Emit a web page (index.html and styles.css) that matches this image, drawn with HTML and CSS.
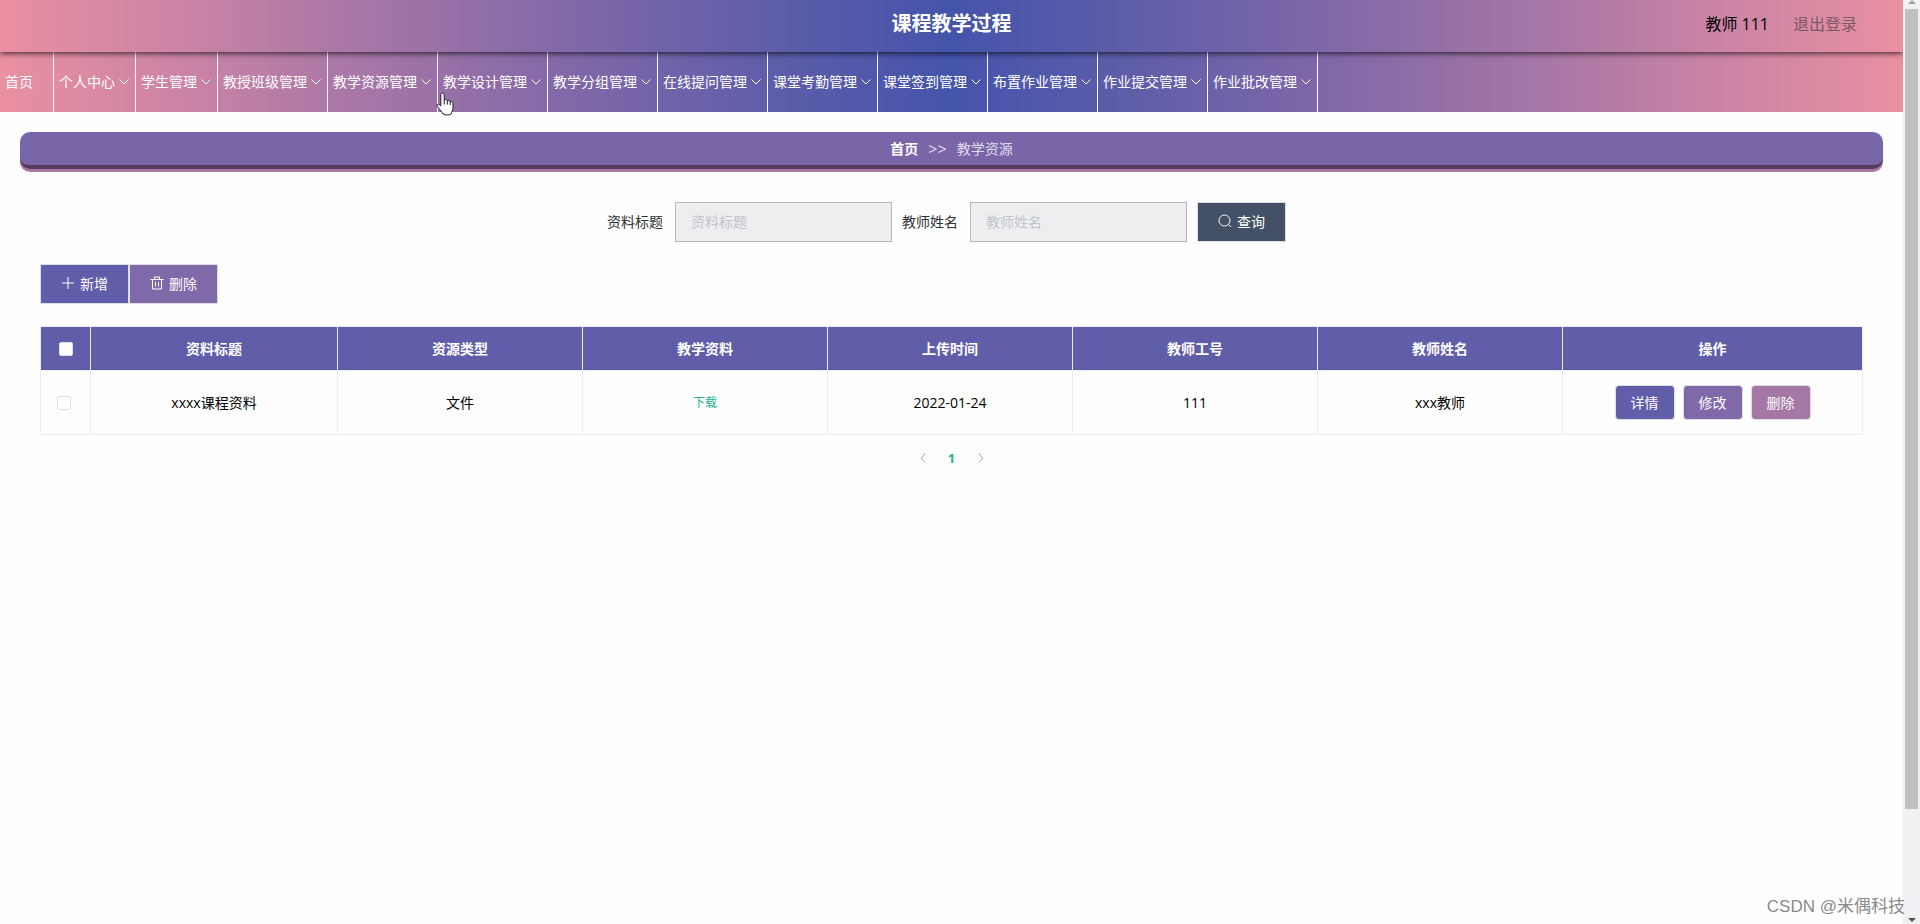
FILE: index.html
```html
<!DOCTYPE html>
<html lang="zh-CN">
<head>
  <meta charset="UTF-8">
  <meta name="viewport" content="width=device-width, initial-scale=1">
  <title>课程教学过程</title>
  <link rel="stylesheet" href="styles.css">
</head>
<body>
  <svg class="symbols" aria-hidden="true">
    <symbol id="arrow" viewBox="0 0 10 6"><path d="M0.5 0.5 5 5 9.5 0.5"/></symbol>
  </svg>

  <div class="app">
    <header class="header">
      <h1>课程教学过程</h1>
      <div class="user">
        <span>教师 111</span>
        <a href="#" class="logout">退出登录</a>
      </div>
    </header>

    <nav class="menu">
      <a href="#" class="home">首页</a>
      <a href="#">个人中心<svg><use href="#arrow"/></svg></a>
      <a href="#">学生管理<svg><use href="#arrow"/></svg></a>
      <a href="#">教授班级管理<svg><use href="#arrow"/></svg></a>
      <a href="#">教学资源管理<svg><use href="#arrow"/></svg></a>
      <a href="#">教学设计管理<svg><use href="#arrow"/></svg></a>
      <a href="#">教学分组管理<svg><use href="#arrow"/></svg></a>
      <a href="#">在线提问管理<svg><use href="#arrow"/></svg></a>
      <a href="#">课堂考勤管理<svg><use href="#arrow"/></svg></a>
      <a href="#">课堂签到管理<svg><use href="#arrow"/></svg></a>
      <a href="#">布置作业管理<svg><use href="#arrow"/></svg></a>
      <a href="#">作业提交管理<svg><use href="#arrow"/></svg></a>
      <a href="#">作业批改管理<svg><use href="#arrow"/></svg></a>
    </nav>

    <main class="main">
      <div class="breadcrumb">
        <a href="#">首页</a>
        <span class="separator">&gt;&gt;</span>
        <span>教学资源</span>
      </div>

      <div class="content">
        <form class="search">
          <div class="field">
            <label for="title">资料标题</label>
            <input type="text" id="title" placeholder="资料标题">
          </div>
          <div class="field">
            <label for="teacher">教师姓名</label>
            <input type="text" id="teacher" placeholder="教师姓名">
          </div>
          <button type="button" class="btn btn-search">
            <svg class="icon" viewBox="0 0 14 14"><circle cx="6.5" cy="6.5" r="5.5"/><path d="M10.5 10.5 13 13"/></svg>查询
          </button>
        </form>

        <div class="actions">
          <button type="button" class="btn btn-blue">
            <svg class="icon" viewBox="0 0 14 14"><path d="M7 1v12M1 7h12"/></svg>新增
          </button>
          <button type="button" class="btn btn-purple">
            <svg class="icon" viewBox="0 0 14 14"><path d="M0.5 3.5h13M4.5 3V1h5v2M2.5 3.5v9.5h9V3.5M5.5 6v4.5M8.5 6v4.5"/></svg>删除
          </button>
        </div>

        <table class="list">
          <colgroup>
            <col class="col-check">
            <col class="col-title">
            <col><col><col><col><col>
            <col class="col-op">
          </colgroup>
          <thead>
            <tr>
              <th><input type="checkbox" aria-label="全选"></th>
              <th>资料标题</th>
              <th>资源类型</th>
              <th>教学资料</th>
              <th>上传时间</th>
              <th>教师工号</th>
              <th>教师姓名</th>
              <th>操作</th>
            </tr>
          </thead>
          <tbody>
            <tr>
              <td class="check"><input type="checkbox" aria-label="选择"></td>
              <td>xxxx课程资料</td>
              <td>文件</td>
              <td><a href="#" class="download">下载</a></td>
              <td>2022-01-24</td>
              <td>111</td>
              <td>xxx教师</td>
              <td>
                <div class="ops">
                  <button type="button" class="btn-small btn-blue">详情</button>
                  <button type="button" class="btn-small btn-purple">修改</button>
                  <button type="button" class="btn-small btn-pink">删除</button>
                </div>
              </td>
            </tr>
          </tbody>
        </table>

        <div class="pagination">
          <button type="button" aria-label="上一页"><svg viewBox="0 0 6 10"><path d="M5.5 0.5 1 5l4.500 4.500"/></svg></button>
          <button type="button" class="active">1</button>
          <button type="button" aria-label="下一页"><svg viewBox="0 0 6 10"><path d="M0.5 0.5 5 5 0.5 9.500"/></svg></button>
        </div>
      </div>
    </main>
  </div>

  <div class="scrollbar">
    <svg class="up" viewBox="0 0 8 4"><path d="M4 0 8 4H0z"/></svg>
    <div class="thumb"></div>
    <svg class="down" viewBox="0 0 8 4"><path d="M0 0h8L4 4z"/></svg>
  </div>

  <svg class="cursor" viewBox="0 0 18 24">
    <path d="M6.500 1C7.600 1 8.200 1.800 8.200 2.800V8C8.800 7.300 11 7.300 11.300 8.600 12.200 8 14 8.300 14.200 9.600 15.500 9.200 17 9.800 17 11.500V16C17 18.500 15.500 19.500 15.200 22 13.500 23.300 9 23.300 7 22 6 19.500 3.500 17.500 1.200 14.200 0.400 12.800 2 11.500 3.300 12.600L4.800 14V2.800C4.800 1.800 5.400 1 6.500 1Z"/>
    <path d="M8.200 8v4.500M11.300 8.600v4M14.200 9.600v3.400"/>
  </svg>
  <div class="watermark">CSDN @米偶科技</div>
</body>
</html>
```

FILE: styles.css
```css
* {
  box-sizing: border-box;
}
body {
  margin: 0;
  display: flex;
  height: 100vh;
  position: relative;
  overflow: hidden;
  background: #fefefe;
  font-family: "Open Sans", "Noto Sans CJK SC", sans-serif;
  font-size: 14px;
  line-height: 20px;
  color: #000;
}
a {
  color: inherit;
  text-decoration: none;
}
button, input {
  font-family: inherit;
  font-size: 14px;
  margin: 0;
}
button {
  cursor: pointer;
}
svg {
  fill: none;
  stroke: currentColor;
}
.symbols {
  position: absolute;
  width: 0;
  height: 0;
}
.app {
  flex: 1;
  min-width: 0;
  overflow: hidden;
}

/* header */
.header, .menu {
  background: linear-gradient(90deg, #ea90a1 0%, #ca83a5 10%, #ae79a6 17%, #8469a8 29%, #605ea9 40%, #4454ab 50%, #605ea9 60%, #8469a8 71%, #ae79a6 83%, #ca83a5 90%, #ea90a1 100%);
}
.header {
  display: grid;
  grid-template-columns: 1fr auto 1fr;
  align-items: center;
  height: 52px;
  padding-bottom: 5px;
  position: relative;
  box-shadow: 0 1px 6px rgba(0, 0, 0, 0.8);
}
.header h1 {
  grid-column: 2;
  margin: 0;
  font-size: 20px;
  line-height: 28px;
  color: #fff;
}
.user {
  display: flex;
  justify-content: flex-end;
  gap: 24px;
  padding-right: 46px;
  font-size: 16px;
}
.logout {
  color: #7d5a68;
}

/* menu */
.menu {
  display: flex;
  height: 60px;
}
.menu a {
  display: flex;
  align-items: center;
  padding: 0 5px;
  border-right: 1px solid #fff;
  color: #fff;
  white-space: nowrap;
}
.menu .home {
  padding-right: 20px;
}
.menu svg {
  width: 10px;
  height: 6px;
  margin-left: 4px;
  margin-right: 1px;
}

/* main */
.main {
  padding: 20px;
}
.breadcrumb {
  display: flex;
  justify-content: center;
  align-items: center;
  gap: 10px;
  height: 37px;
  background: #7866a8;
  border-bottom: 4px solid #553c58;
  border-radius: 10px;
  box-shadow: 0 3px 0 #a577a5;
  color: #e0dcec;
}
.breadcrumb a {
  font-weight: bold;
  color: #fff;
}
.separator {
  font-size: 16px;
}
.content {
  padding: 33px 20px;
}
.search {
  display: flex;
  justify-content: center;
  gap: 10px;
  padding-right: 10px;
}
.field {
  display: flex;
  align-items: center;
  gap: 12px;
  color: #303133;
}
.field input {
  width: 217px;
  height: 40px;
  padding: 0 15px 2px;
  background: #eeeef0;
  border: 1px solid #b8b8ba;
}
.field input::placeholder {
  color: #c0c4cc;
}
.btn {
  display: flex;
  align-items: center;
  justify-content: center;
  gap: 5px;
  width: 89px;
  height: 40px;
  padding: 0 0 2px;
  border: 1px solid #dcdfe6;
  color: #fff;
}
.icon {
  width: 14px;
  height: 14px;
}
.btn-search {
  background: #435065;
}
.btn-blue {
  background: #605ea9;
}
.btn-purple {
  background: #7f69a8;
}
.btn-pink {
  background: #a577a5;
}
.actions {
  display: flex;
  margin: 22px 0;
}

/* table */
.list {
  width: 100%;
  table-layout: fixed;
  border-collapse: collapse;
  text-align: center;
}
.col-check {
  width: 50px;
}
.col-title {
  width: 247px;
}
.col-op {
  width: 300px;
}
.list th, .list td {
  padding: 0;
  border: 1px solid #ebeef5;
}
.list th {
  height: 44px;
  background: #605ea9;
  color: #fff;
}
.list td {
  height: 64px;
}
.list input {
  appearance: none;
  display: block;
  width: 14px;
  height: 14px;
  margin: 0 auto;
  background: #fff;
  border: 1px solid #dcdfe6;
  border-radius: 2px;
}
.list .check {
  padding-right: 4px;
}
.download {
  font-size: 12px;
  color: #25b090;
}
.ops {
  display: flex;
  justify-content: center;
  gap: 8px;
}
.btn-small {
  width: 60px;
  height: 35px;
  padding: 0 0 2px;
  border: 1px solid #dcdfe6;
  border-radius: 4px;
  color: #fff;
}

/* pagination */
.pagination {
  display: flex;
  justify-content: center;
  margin-top: 9px;
}
.pagination button {
  display: flex;
  align-items: center;
  justify-content: center;
  width: 29px;
  height: 28px;
  padding: 0;
  border: none;
  background: none;
  color: #a8abb5;
}
.pagination svg {
  width: 6px;
  height: 10px;
}
.pagination .active {
  font-size: 13px;
  font-weight: bold;
  color: #25b090;
}

/* scrollbar */
.scrollbar {
  display: flex;
  flex-direction: column;
  align-items: center;
  width: 17px;
  background: #f1f0f2;
}
.scrollbar svg {
  width: 8px;
  height: 4px;
  stroke: none;
  fill: #505050;
}
.scrollbar .up {
  fill: #a3a3a3;
}
.thumb {
  width: 13px;
  height: 86.6%;
  margin-top: 5px;
  background: #c1c1c1;
}
.scrollbar .down {
  margin-top: auto;
  margin-bottom: 2px;
}

.cursor {
  position: absolute;
  left: 436px;
  top: 92px;
  width: 18px;
  height: 24px;
  fill: #fff;
  stroke: #1d1a30;
}
.watermark {
  position: absolute;
  right: 15px;
  bottom: 5px;
  font-family: "Liberation Sans", "Noto Sans CJK SC", sans-serif;
  font-size: 17px;
  line-height: 24px;
  color: #8a8a8a;
}
```
